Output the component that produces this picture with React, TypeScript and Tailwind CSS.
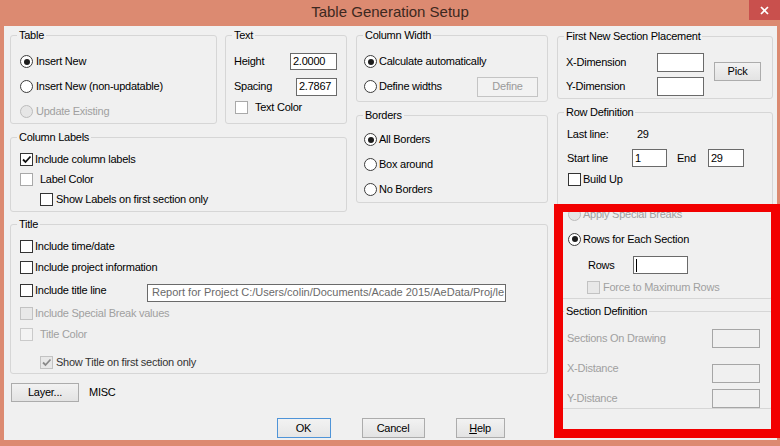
import React, { ReactNode } from 'react';

const disabledText = 'text-[#a0a0a0]';

function Group({ label, className, children }: { label: string; className: string; children?: ReactNode }) {
  return (
    <div className={`relative border border-[#d6d6d6] rounded-[3px] ${className}`}>
      <span className="absolute -top-[7px] left-[6px] px-[2px] bg-[#f0f0f0] leading-[13px] whitespace-nowrap">{label}</span>
      {children}
    </div>
  );
}

function Radio({ checked, disabled }: { checked?: boolean; disabled?: boolean }) {
  return (
    <span
      className={`w-[13px] h-[13px] shrink-0 rounded-full border flex items-center justify-center ${
        disabled ? 'border-[#bcbcbc] bg-[#e6e6e6]' : 'border-[#3c3c3c] bg-white'
      }`}
    >
      {checked && <span className="w-[6px] h-[6px] rounded-full bg-[#1c1c1c]" />}
    </span>
  );
}

function Check({ checked, disabled, light }: { checked?: boolean; disabled?: boolean; light?: boolean }) {
  const box = disabled
    ? 'border-[#c2c2c2] bg-[#e8e8e8]'
    : light
    ? 'border-[#a9a9a9] bg-white'
    : 'border-[#333333] bg-white';
  return (
    <span className={`w-[13px] h-[13px] shrink-0 border flex items-center justify-center ${box}`}>
      {checked && (
        <svg width="11" height="11" viewBox="0 0 11 11">
          <path
            d="M2 5.5 L4.5 8 L9.5 2.5"
            fill="none"
            stroke={disabled ? '#8a8a8a' : '#111'}
            strokeWidth="1.8"
          />
        </svg>
      )}
    </span>
  );
}

function Field({ className, children }: { className: string; children?: ReactNode }) {
  return (
    <div className={`shrink-0 border border-[#6a6a6a] bg-white flex items-center pl-[2px] overflow-hidden whitespace-nowrap leading-[13px] ${className}`}>
      {children}
    </div>
  );
}

function DisabledField({ className }: { className: string }) {
  return <div className={`shrink-0 border border-[#a6a6a6] bg-[#f0f0f0] ${className}`} />;
}

function Button({ className, children, disabled, primary }: { className: string; children: ReactNode; disabled?: boolean; primary?: boolean }) {
  const look = disabled
    ? 'border-[#c4c4c4] bg-[#f2f2f2] text-[#9a9a9a]'
    : primary
    ? 'border-[#4f94d8] bg-gradient-to-b from-[#f2f2f2] to-[#e6e6e6]'
    : 'border-[#acacac] bg-gradient-to-b from-[#f2f2f2] to-[#e3e3e3]';
  return <div className={`shrink-0 border flex items-center justify-center leading-[13px] ${look} ${className}`}>{children}</div>;
}

export default function App() {
  return (
    <div className="relative w-[780px] h-[446px] overflow-hidden bg-[#dc8a71] font-['Liberation_Sans',Arial,sans-serif] text-[11px] leading-[13px] tracking-[-0.25px] text-black">
      {/* title bar */}
      <div className="h-[26px] flex">
        <div className="w-[31px]" />
        <div className="flex-1 flex justify-center pt-[4px] text-[15px] leading-[16px] tracking-normal text-[#3d2820]">
          Table Generation Setup
        </div>
        <div className="w-[31px] h-[20px] bg-[#c9504d] flex items-center justify-center">
          <svg width="9" height="9" viewBox="0 0 9 9">
            <path d="M1 1 L8 8 M8 1 L1 8" stroke="#fff" strokeWidth="1.7" />
          </svg>
        </div>
      </div>

      {/* client area */}
      <div className="ml-[4px] w-[773px] h-[414px] bg-[#f0f0f0] flex flex-col">
        <div className="flex items-start pl-[6px] pt-[9px]">
          {/* left region */}
          <div className="w-[538px] flex flex-col">
            <div className="flex gap-[9px]">
              <div className="w-[337px] flex flex-col">
                <div className="flex gap-[8px]">
                  <Group label="Table" className="w-[207px] h-[89px] pl-[9px] pt-[13px]">
                    <div className="h-[25px] flex items-center gap-[3px]">
                      <Radio checked />
                      <span>Insert New</span>
                    </div>
                    <div className="h-[25px] flex items-center gap-[3px]">
                      <Radio />
                      <span>Insert New (non-updatable)</span>
                    </div>
                    <div className="h-[25px] flex items-center gap-[3px]">
                      <Radio disabled />
                      <span className={disabledText}>Update Existing</span>
                    </div>
                  </Group>
                  <Group label="Text" className="w-[122px] h-[89px] pl-[8px] pr-[9px] pt-[13px]">
                    <div className="h-[25px] flex items-center justify-between">
                      <span>Height</span>
                      <Field className="w-[47px] h-[17px]">2.0000</Field>
                    </div>
                    <div className="h-[25px] flex items-center justify-between">
                      <span>Spacing</span>
                      <Field className="w-[41px] h-[18px]">2.7867</Field>
                    </div>
                    <div className="h-[16px] flex items-center gap-[7px] pl-[1px]">
                      <Check light />
                      <span>Text Color</span>
                    </div>
                  </Group>
                </div>
                <Group label="Column Labels" className="mt-[13px] w-[337px] h-[75px] pl-[9px] pt-[11px]">
                  <div className="h-[20px] flex items-center gap-[2px]">
                    <Check checked />
                    <span>Include column labels</span>
                  </div>
                  <div className="h-[20px] flex items-center gap-[7px]">
                    <Check light />
                    <span>Label Color</span>
                  </div>
                  <div className="h-[20px] flex items-center gap-[3px] ml-[20px]">
                    <Check />
                    <span>Show Labels on first section only</span>
                  </div>
                </Group>
              </div>
              <div className="w-[192px] flex flex-col">
                <Group label="Column Width" className="w-[192px] h-[67px] pl-[7px] pr-[9px] pt-[13px]">
                  <div className="h-[25px] flex items-center gap-[2px]">
                    <Radio checked />
                    <span>Calculate automatically</span>
                  </div>
                  <div className="h-[25px] flex items-center justify-between">
                    <div className="flex items-center gap-[2px]">
                      <Radio />
                      <span>Define widths</span>
                    </div>
                    <Button disabled className="w-[61px] h-[20px]">Define</Button>
                  </div>
                </Group>
                <Group label="Borders" className="mt-[13px] w-[192px] h-[88px] pl-[7px] pt-[11px]">
                  <div className="h-[25px] flex items-center gap-[2px]">
                    <Radio checked />
                    <span>All Borders</span>
                  </div>
                  <div className="h-[25px] flex items-center gap-[2px]">
                    <Radio />
                    <span>Box around</span>
                  </div>
                  <div className="h-[25px] flex items-center gap-[2px]">
                    <Radio />
                    <span>No Borders</span>
                  </div>
                </Group>
              </div>
            </div>

            <Group label="Title" className="mt-[12px] w-[538px] h-[150px] pl-[9px] pt-[11px]">
              <div className="h-[20px] flex items-center gap-[2px]">
                <Check />
                <span>Include time/date</span>
              </div>
              <div className="h-[22px] flex items-center gap-[2px]">
                <Check />
                <span>Include project information</span>
              </div>
              <div className="h-[24px] flex items-center">
                <Check />
                <span className="ml-[2px] w-[112px]">Include title line</span>
                <Field className="mt-[5px] w-[359px] h-[18px] pl-[4px] tracking-normal text-[#6a6a6a]">
                  Report for Project C:/Users/colin/Documents/Acade 2015/AeData/Proj/le
                </Field>
              </div>
              <div className="h-[22px] flex items-center gap-[2px]">
                <Check disabled />
                <span className={disabledText}>Include Special Break values</span>
              </div>
              <div className="h-[20px] flex items-center gap-[7px]">
                <span className="w-[13px] h-[13px] border border-[#cacaca] bg-[#f3f3f3]" />
                <span className={disabledText}>Title Color</span>
              </div>
              <div className="h-[36px] flex items-center gap-[3px] ml-[20px]">
                <Check checked disabled />
                <span className="text-[#333]">Show Title on first section only</span>
              </div>
            </Group>

            <div className="mt-[9px] h-[19px] flex items-center">
              <Button className="ml-[1px] w-[68px] h-[19px]">Layer...</Button>
              <span className="ml-[10px]">MISC</span>
            </div>
          </div>

          {/* right region */}
          <div className="ml-[9px] mt-[1px] w-[216px] flex flex-col">
            <Group label="First New Section Placement" className="w-[216px] h-[63px] pl-[8px] pt-[13px] flex items-center">
              <div className="flex flex-col">
                <div className="h-[24px] flex items-center">
                  <span className="w-[91px]">X-Dimension</span>
                  <Field className="w-[47px] h-[19px]" />
                </div>
                <div className="h-[24px] flex items-center">
                  <span className="w-[91px]">Y-Dimension</span>
                  <Field className="w-[47px] h-[19px]" />
                </div>
              </div>
              <Button className="ml-[10px] mb-[5px] w-[47px] h-[19px]">Pick</Button>
            </Group>

            <Group label="Row Definition" className="mt-[13px] w-[216px] h-[187px] pl-[9px] pt-[11px]">
              <div className="h-[20px] flex items-center">
                <span className="w-[70px]">Last line:</span>
                <span>29</span>
              </div>
              <div className="mt-[4px] h-[20px] flex items-center">
                <span className="w-[65px]">Start line</span>
                <Field className="w-[35px] h-[18px]">1</Field>
                <span className="ml-[10px] w-[31px]">End</span>
                <Field className="w-[36px] h-[18px]">29</Field>
              </div>
              <div className="mt-[1px] h-[20px] flex items-center gap-[2px] pl-[1px]">
                <Check />
                <span>Build Up</span>
              </div>
              <div className="mt-[15px] h-[20px] flex items-center gap-[2px] pl-[1px]">
                <Radio disabled />
                <span className={disabledText}>Apply Special Breaks</span>
              </div>
              <div className="mt-[5px] h-[20px] flex items-center gap-[2px] pl-[1px]">
                <Radio checked />
                <span>Rows for Each Section</span>
              </div>
              <div className="mt-[6px] h-[20px] flex items-center pl-[21px]">
                <span className="w-[45px]">Rows</span>
                <Field className="w-[55px] h-[18px]">
                  <span className="w-px h-[13px] bg-black" />
                </Field>
              </div>
              <div className="mt-[2px] h-[20px] flex items-center gap-[3px] pl-[20px]">
                <Check disabled />
                <span className={disabledText}>Force to Maximum Rows</span>
              </div>
            </Group>

            <Group label="Section Definition" className="mt-[12px] w-[216px] h-[98px] pl-[9px] pr-[12px] pt-[16px]">
              <div className="h-[20px] flex items-center justify-between">
                <span className={disabledText}>Sections On Drawing</span>
                <DisabledField className="w-[48px] h-[19px]" />
              </div>
              <div className="mt-[15px] h-[20px] flex items-center justify-between">
                <span className={`${disabledText} mb-[10px]`}>X-Distance</span>
                <DisabledField className="w-[48px] h-[19px]" />
              </div>
              <div className="mt-[5px] h-[20px] flex items-center justify-between">
                <span className={disabledText}>Y-Distance</span>
                <DisabledField className="w-[48px] h-[19px]" />
              </div>
            </Group>
          </div>
        </div>

        {/* dialog buttons */}
        <div className="mt-[9px] flex justify-center gap-[31px]">
          <Button primary className="w-[54px] h-[20px]">OK</Button>
          <Button className="w-[63px] h-[20px]">Cancel</Button>
          <Button className="w-[49px] h-[20px]">
            <span className="underline">H</span>elp
          </Button>
        </div>
      </div>

      {/* red highlight drawn over the screenshot */}
      <div className="pointer-events-none absolute left-[554px] top-[204px] w-[226px] h-[234px] border-[9px] border-t-[8px] border-[#f20000]" />
    </div>
  );
}
